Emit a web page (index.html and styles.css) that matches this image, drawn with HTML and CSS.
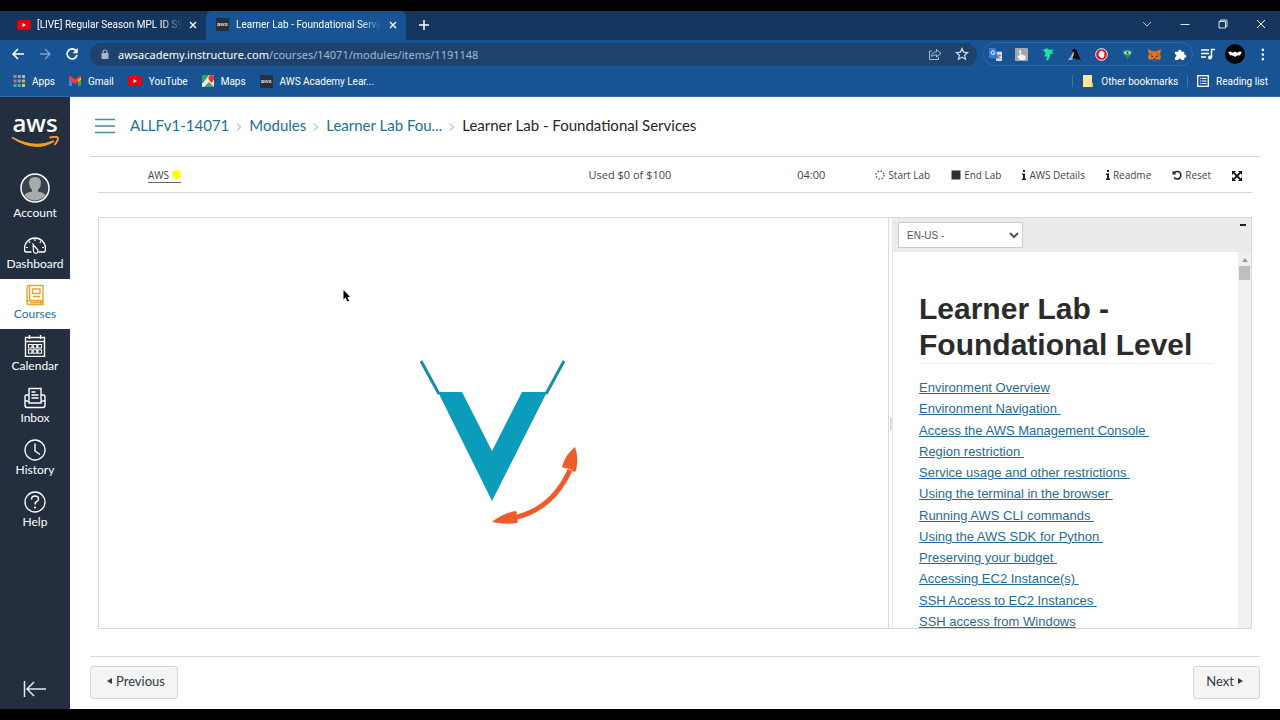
FILE: index.html
```html
<!DOCTYPE html>
<html lang="en">

<head>
    <meta charset="utf-8">
    <title>Learner Lab - Foundational Services</title>
    <link rel="stylesheet" href="styles.css">
</head>

<body>
    <header class="browser">
        <div class="tabs">
            <div class="tab">
                <svg class="yt" viewBox="0 0 14 10"><rect width="14" height="10" rx="2" fill="#e8000b"/><path d="M5.5 3v4L9 5z" fill="#fff"/></svg>
                <span class="tab-title">[LIVE] Regular Season MPL ID S9</span>
                <button class="tab-close" aria-label="Close tab"><svg viewBox="0 0 8 8"><path d="M1 1l6 6M7 1L1 7" stroke="#fff" stroke-width="1.4"/></svg></button>
            </div>
            <div class="tab active">
                <span class="aws-fav">aws</span>
                <span class="tab-title">Learner Lab - Foundational Servic</span>
                <button class="tab-close" aria-label="Close tab"><svg viewBox="0 0 8 8"><path d="M1 1l6 6M7 1L1 7" stroke="#fff" stroke-width="1.4"/></svg></button>
            </div>
            <button class="new-tab" aria-label="New tab"><svg viewBox="0 0 10 10"><path d="M5 0v10M0 5h10" stroke="#fff" stroke-width="1.5"/></svg></button>
            <div class="window-controls">
                <button aria-label="Search tabs"><svg viewBox="0 0 10 10"><path d="M1 3l4 4 4-4" stroke="#b9c8dc" fill="none"/></svg></button>
                <button aria-label="Minimize"><svg viewBox="0 0 10 10"><path d="M.5 5.5h9" stroke="#dce5f0"/></svg></button>
                <button aria-label="Restore"><svg viewBox="0 0 10 10"><path d="M1 2.5h6.5v6.500H1zM2.500 2.500V1h5.500q1 0 1 1v5.500H7.500" stroke="#dce5f0" fill="none"/></svg></button>
                <button aria-label="Close"><svg viewBox="0 0 10 10"><path d="M1 1l8 8M9 1L1 9" stroke="#fff"/></svg></button>
            </div>
        </div>

        <div class="toolbar">
            <button class="nav-btn" aria-label="Back"><svg viewBox="0 0 14 14"><path d="M13 7H2M7 2L2 7l5 5" stroke="#fff" stroke-width="1.6" fill="none"/></svg></button>
            <button class="nav-btn" aria-label="Forward"><svg viewBox="0 0 14 14"><path d="M2 7h10M7 2l5 5-5 5" stroke="#7f9fca" stroke-width="1.4" fill="none"/></svg></button>
            <button class="nav-btn" aria-label="Reload"><svg viewBox="0 0 14 14"><path d="M11.500 4.500A5 5 0 1 0 12 8" stroke="#fff" stroke-width="1.700" fill="none"/><path d="M12.800 1v5.200H7.600z" fill="#fff"/></svg></button>
            <div class="omnibox">
                <svg class="lock" viewBox="0 0 10 10"><rect x="1.500" y="4" width="7" height="6" rx="1" fill="#a9b7c8"/><path d="M3 4.500V3a2 2 0 0 1 4 0v1.500" stroke="#a9b7c8" stroke-width="1.200" fill="none"/></svg>
                <span class="url"><b>awsacademy.instructure.com</b>/courses/14071/modules/items/1191148</span>
                <button aria-label="Share"><svg viewBox="0 0 14 14"><path d="M4 4H1.500v8.500h9V10" stroke="#a9bfdc" fill="none"/><path d="M3.500 9.500q.5-4.500 5-4.700V2.500l4.500 3.800-4.500 3.700V7.800q-3 0-5 1.700z" stroke="#a9bfdc" fill="none"/></svg></button>
                <button aria-label="Bookmark this tab"><svg viewBox="0 0 14 14"><path d="M7 1.500l1.600 3.700 4 .4-3 2.700.9 3.900L7 10.100l-3.500 2.100.9-3.900-3-2.700 4-.4z" stroke="#d3deec" stroke-width="1.200" fill="none"/></svg></button>
            </div>
            <div class="extensions">
                <svg viewBox="0 0 14 14"><path d="M6 4h8v10H8z" fill="#d9dde3"/><path d="M9 8h4M11 7v1q0 2-2 3.500M9.500 9q1 2 3 2.500" stroke="#667" fill="none" stroke-width=".8"/><path d="M0 0h7l3 11H1q-1 0-1-1z" fill="#3f79dd"/><path d="M6 3.800a2 2 0 1 0 .4 1.700H4.500" stroke="#fff" fill="none"/></svg>
                <svg viewBox="0 0 14 14"><rect width="14" height="14" rx="1" fill="#a5a9ac"/><path d="M4 3q1-1.500 2.500 0V7l4 1q1.500.5 1 2.500L10.500 13H5L2.500 9l1-1L5 9V5z" fill="#f4f4f4"/></svg>
                <svg viewBox="0 0 14 14"><path d="M0 2l3-.5L5 0l2 1.500 6 .5-2.500 2L13 6.500 9 6l-.5 3-2 4.500L4.500 13 5.500 9 2 9.500 4 6 2.500 3.500z" fill="#1fe59a"/></svg>
                <svg viewBox="0 0 14 14"><path d="M0 13h5L5.500 5 3 9z" fill="#9bacbf"/><path d="M4.500 3q.5-2.500 3-2 2 .5 2.500 3.500l2.500 5.500 1.500 3-3-1.500L10 13 7 10.500 5 12l1-7z" fill="#0a0a0d"/><path d="M6 4.500L5 9" stroke="#ddd"/></svg>
                <svg viewBox="0 0 14 14"><circle cx="7" cy="7" r="6.300" fill="#d5142e" stroke="#fff" stroke-width="1"/><path d="M4 7V5h1V3.500h1V3h2v.5h1v1h1V8q0 3-3 3-1.500 0-3.500-3.500z" fill="#fff"/></svg>
                <svg viewBox="0 0 14 14"><path d="M2 3l5-2 5 2q0 5-4 7l-1 3-1-3Q2 8 2 3z" fill="#1b8d62"/><ellipse cx="7" cy="5" rx="3.500" ry="1.800" fill="#d8efdf"/><circle cx="7" cy="5" r="1.300" fill="#174a3c"/></svg>
                <svg viewBox="0 0 14 14"><path d="M0 1l5 2.500h4L14 1l-1 6 1 3-1 3-3-.8-1.500 1h-3L4 12.200 1 13l-1-3 1-3z" fill="#e2761b"/><path d="M1 7l4-3.500L4 8zM13 7L9 3.500 10 8z" fill="#c05f18"/><path d="M3.500 8.500l2 1M10.500 8.500l-2 1M5.500 12h3" stroke="#26333f" stroke-width="1.200"/></svg>
                <svg viewBox="0 0 14 14"><path d="M1 4h3.500a1.800 1.800 0 1 1 3.500 0h3v3a1.800 1.800 0 1 1 0 3.500V13H8a1.700 1.700 0 0 0-3.400 0H1V9.800a1.700 1.700 0 0 0 0-3.400z" fill="#fff"/></svg>
            </div>
            <button class="media" aria-label="Media control"><svg viewBox="0 0 14 12"><path d="M0 2h8M0 5.500h8M0 9h5" stroke="#fff" stroke-width="1.500"/><path d="M10.500 9V1.500H14" stroke="#fff" stroke-width="1.500" fill="none"/><circle cx="9" cy="9.500" r="2" fill="#fff"/></svg></button>
            <button class="profile" aria-label="Profile"><svg viewBox="0 0 20 20"><circle cx="10" cy="10" r="10" fill="#000"/><path d="M3 8q3-1 4 .5h1.800l.4-1 .8.500.8-.5.4 1H13q1-1.500 4-.5-1.500 1.500-2 3.500-2-.5-3 .3-1 0-2 1.400-1-1.400-2-1.400-1-.8-3-.3-.5-2-2-3.500z" fill="#fff"/></svg></button>
            <button class="dots" aria-label="Menu"><svg viewBox="0 0 4 14"><circle cx="2" cy="2" r="1.400" fill="#fff"/><circle cx="2" cy="7" r="1.400" fill="#fff"/><circle cx="2" cy="12" r="1.400" fill="#fff"/></svg></button>
        </div>

        <nav class="bookmarks">
            <a href="#"><svg class="bm" viewBox="0 0 12 12"><path d="M.5 0h3v3h-3zM.5 4.500h3v3h-3z" fill="#d66f66"/><path d="M4.800 0h3v3h-3z" fill="#e98279"/><path d="M9 0h3v3H9zM9 4.500h3v3H9z" fill="#d4b45c"/><path d="M4.800 4.500h3v3h-3z" fill="#66a2ed"/><path d="M.5 9h3v3h-3zM4.800 9h3v3h-3z" fill="#5aa889"/><path d="M9 9h3v3H9z" fill="#d6c370"/></svg>Apps</a>
            <a href="#"><svg class="bm" viewBox="0 0 12 12"><path d="M0 2.500V10q0 1 1 1h2V5z" fill="#4285f4"/><path d="M12 2.500V10q0 1-1 1H9V5z" fill="#34a853"/><path d="M0 2q1-1.500 2.500-.5L6 4.500l3.500-3Q11 .5 12 2v3L6 9 0 5z" fill="#e84033"/><path d="M9 5l3-3v3L9 7z" fill="#fbbc04"/></svg>Gmail</a>
            <a href="#"><svg class="yt" viewBox="0 0 14 10"><rect width="14" height="10" rx="2" fill="#e8000b"/><path d="M5.500 3v4L9 5z" fill="#fff"/></svg>YouTube</a>
            <a href="#"><svg class="bm" viewBox="0 0 12 12"><rect width="12" height="12" rx="1" fill="#e5eee5"/><path d="M0 0h7L1 8H0z" fill="#2da94f"/><path d="M6 6l6 6H1z" fill="#4f9f65"/><path d="M0 11L9 2l1 2-8 8z" fill="#f3f3ef"/><path d="M9.500 8Q6.500 4.500 6.500 3a3 3 0 0 1 6 0Q12.500 4.500 9.500 8z" fill="#e4382d"/></svg>Maps</a>
            <a href="#"><span class="aws-fav">aws</span>AWS Academy Lear...</a>
            <div class="bookmarks-right">
                <a href="#"><svg class="bm" viewBox="0 0 12 12"><path d="M1 0h9v8h1v4H1z" fill="#fce694"/><path d="M9 8h2v4H9z" fill="#e5c65c"/></svg>Other bookmarks</a>
                <a href="#"><svg class="bm" viewBox="0 0 12 12"><rect x=".7" y=".7" width="10.600" height="10.600" fill="none" stroke="#fff" stroke-width="1.300"/><path d="M3 3.500h1.200M5 3.500h4.500M3 6h1.200M5 6h4.500M3 8.500h1.200M5 8.500h4.500" stroke="#fff"/></svg>Reading list</a>
            </div>
        </nav>
    </header>

    <div class="page">
        <nav class="sidebar">
            <a class="logo" href="#" aria-label="AWS Academy">
                <span>aws</span>
                <svg viewBox="0 0 48 12"><path d="M1 1.500q22 12 42 3.500-19 12-42-3.500z" fill="#f29d1f" stroke="#f29d1f" stroke-width="1.500"/><path d="M38.500 1.500q8-1.500 8.500.5t-3.500 7" stroke="#f29d1f" stroke-width="2" fill="none"/></svg>
            </a>
            <a class="side-item account" href="#">
                <svg viewBox="0 0 30 30"><circle cx="15" cy="15" r="14" fill="#39434f"/><path d="M12 17v1.500Q5 20 4.500 22.500q10 10 21 0Q25 20 18 18.500V17q3-3 3-7 0-6-6-6T9 10q0 4 3 7z" fill="#a8abad"/><circle cx="15" cy="15" r="14" fill="none" stroke="#fff" stroke-width="1.500"/></svg>
                Account
            </a>
            <a class="side-item" href="#">
                <svg viewBox="0 0 22 22"><path d="M2 18Q.5 18 .5 14.500a10.500 10.500 0 0 1 21 0Q21.500 18 20 18h-5.500M2 18h5.500" stroke="#fff" stroke-width="1.400" fill="none"/><path d="M9 10.500l4.500 5a2.300 2.300 0 1 1-4 1z" stroke="#fff" stroke-width="1.200" fill="none"/><path d="M11 4.500v2.500M5 7.500l1.300 1.300M17 7.500l-1.300 1.300M2 13.500h2M18 13.500h2" stroke="#fff" stroke-width="1.200"/></svg>
                Dashboard
            </a>
            <a class="side-item current" href="#">
                <svg viewBox="0 0 22 22"><path d="M19 1.500H5.500Q3 1.500 3 4v14q0 2.500 2.500 2.500H19zM19 16.500H5.500Q3 16.500 3 18.500M5.500 1.500v15M8.500 5H16v4.500H8.500zM9 12.500h7M6 18.500h13M17 16.500v4" stroke="#e9a22d" stroke-width="1.400" fill="none"/></svg>
                Courses
            </a>
            <a class="side-item" href="#">
                <svg viewBox="0 0 22 22"><path d="M1.500 2.500h19v19h-19zM1.500 6.500h19M5.500 0v4M16.500 0v4" stroke="#fff" stroke-width="1.400" fill="none"/><path d="M4.500 9.500h3.500v3.500H4.500zM9.300 9.500h3.500v3.500H9.300zM14 9.500h3.500v3.500H14zM4.500 14.800h3.500v3.500H4.500zM9.300 14.800h3.500v3.500H9.300zM14 14.800h3.500v3.500H14z" stroke="#fff" stroke-width="1.100" fill="none"/></svg>
                Calendar
            </a>
            <a class="side-item" href="#">
                <svg viewBox="0 0 22 22"><path d="M5 13V1.500h12V13M7.500 5h4M7.500 8h7M7.500 11h7M5 8H2.500Q1 8 1 10v8q0 2.500 2 2.500h16q2 0 2-2.500v-8q0-2-1.500-2H17M1 14h4v2h12v-2h4" stroke="#fff" stroke-width="1.400" fill="none"/></svg>
                Inbox
            </a>
            <a class="side-item" href="#">
                <svg viewBox="0 0 22 22"><circle cx="11" cy="11" r="10" stroke="#fff" stroke-width="1.300" fill="none"/><path d="M11 4.500V12l5 3.500" stroke="#fff" stroke-width="1.400" fill="none"/></svg>
                History
            </a>
            <a class="side-item" href="#">
                <svg viewBox="0 0 22 22"><circle cx="11" cy="11" r="10" stroke="#fff" stroke-width="1.300" fill="none"/><path d="M7.500 8.500q0-3.500 3.500-3.500t3.500 3q0 1.500-1.800 2.500T11 13.500" stroke="#fff" stroke-width="1.500" fill="none"/><circle cx="11" cy="16.500" r="1.100" fill="#fff"/></svg>
                Help
            </a>
            <button class="collapse" aria-label="Minimize global navigation"><svg viewBox="0 0 24 18"><path d="M1.500 1v16M23 9H5M11 2L4 9l7 7" stroke="#e4e9ee" stroke-width="1.500" fill="none"/></svg></button>
        </nav>

        <main class="content">
            <div class="crumbs">
                <button class="hamburger" aria-label="Course navigation"><svg viewBox="0 0 20 16"><path d="M0 1.500h20M0 8h20M0 14.500h20" stroke="#4e8ba0" stroke-width="1.500"/></svg></button>
                <a href="#">ALLFv1-14071</a>
                <svg class="chev" viewBox="0 0 6 8"><path d="M1 .5L4.500 4 1 7.500" stroke="#8b969e" fill="none"/></svg>
                <a href="#">Modules</a>
                <svg class="chev" viewBox="0 0 6 8"><path d="M1 .5L4.500 4 1 7.500" stroke="#8b969e" fill="none"/></svg>
                <a href="#">Learner Lab Fou...</a>
                <svg class="chev" viewBox="0 0 6 8"><path d="M1 .5L4.500 4 1 7.500" stroke="#8b969e" fill="none"/></svg>
                <span>Learner Lab - Foundational Services</span>
            </div>

            <div class="lab-bar">
                <div class="lab-aws"><a href="#">AWS <i class="status"></i></a></div>
                <span>Used $0 of $100</span>
                <span>04:00</span>
                <div class="lab-actions">
                    <button><svg viewBox="0 0 10 10"><circle cx="5" cy="5" r="4" stroke="#555" stroke-width="1.400" stroke-dasharray="1.500 1.640" fill="none"/></svg>Start Lab</button>
                    <button><svg viewBox="0 0 10 10"><path d="M.5.500h9v9h-9z" fill="#2d2f33"/></svg>End Lab</button>
                    <button><svg class="info" viewBox="0 0 4 10"><path d="M1 0h2v2H1zM0 3.500h3V8.500h1V10H0V8.500h1V5H0z" fill="#222"/></svg>AWS Details</button>
                    <button><svg class="info" viewBox="0 0 4 10"><path d="M1 0h2v2H1zM0 3.500h3V8.500h1V10H0V8.500h1V5H0z" fill="#222"/></svg>Readme</button>
                    <button><svg viewBox="0 0 10 10"><path d="M2 3a3.800 3.800 0 1 1 0 4.500" stroke="#222" stroke-width="1.500" fill="none"/><path d="M.5.500v4h4z" fill="#222"/></svg>Reset</button>
                    <button class="full" aria-label="Full screen"><svg viewBox="0 0 10 10"><path d="M2 2l6 6M8 2L2 8" stroke="#111" stroke-width="1.800"/><path d="M0 0h4L0 4zM10 0v4L6 0zM0 10V6l4 4zM10 10H6l4-4z" fill="#111"/></svg></button>
                </div>
            </div>

            <div class="frame">
                <section class="terminal">
                    <svg class="loader" viewBox="0 0 160 168">
                        <path d="M19 33h24l30 59 30-59h25L73 142z" fill="#0c9cbb"/>
                        <path d="M2 2l18 33M145 2l-18 33" stroke="#158fa9" stroke-width="3"/>
                        <path d="M94 159Q133 151 151 111" stroke="#ee5c29" stroke-width="5" fill="none"/>
                        <path d="M73 163q10-8 23-11l2 1-1 4 2 6-1 1q-12 2-25-1zM156 88q4 10 1 24l-2 1-4-3-6-1-2-1q3-12 13-20z" fill="#ee5c29"/>
                    </svg>
                    <svg class="pointer" viewBox="0 0 8 12"><path d="M.5 0v9.500l2-2 1.800 4 1.700-.8L4.300 7H7z" fill="#000"/></svg>
                </section>
                <div class="splitter"></div>
                <section class="readme">
                    <div class="readme-head">
                        <select aria-label="Language">
                            <option>EN-US -</option>
                        </select>
                        <button class="minimize" aria-label="Minimize"></button>
                    </div>
                    <div class="readme-body">
                        <article>
                            <h1>Learner Lab - Foundational Level</h1>
                            <ul>
                                <li><a href="#">Environment Overview</a></li>
                                <li><a href="#">Environment Navigation&nbsp;</a></li>
                                <li><a href="#">Access the AWS Management Console&nbsp;</a></li>
                                <li><a href="#">Region restriction&nbsp;</a></li>
                                <li><a href="#">Service usage and other restrictions&nbsp;</a></li>
                                <li><a href="#">Using the terminal in the browser&nbsp;</a></li>
                                <li><a href="#">Running AWS CLI commands&nbsp;</a></li>
                                <li><a href="#">Using the AWS SDK for Python&nbsp;</a></li>
                                <li><a href="#">Preserving your budget&nbsp;</a></li>
                                <li><a href="#">Accessing EC2 Instance(s)&nbsp;</a></li>
                                <li><a href="#">SSH Access to EC2 Instances&nbsp;</a></li>
                                <li><a href="#">SSH access from Windows</a></li>
                            </ul>
                        </article>
                        <div class="scrollbar">
                            <svg viewBox="0 0 8 4"><path d="M1 4l3-4 3 4z" fill="#999"/></svg>
                            <div class="thumb"></div>
                        </div>
                    </div>
                </section>
            </div>

            <footer class="pager">
                <a href="#"><svg viewBox="0 0 5 6"><path d="M5 0v6L0 3z" fill="#2d3b45"/></svg>Previous</a>
                <a href="#">Next<svg viewBox="0 0 5 6"><path d="M0 0v6l5-3z" fill="#2d3b45"/></svg></a>
            </footer>
        </main>
    </div>
</body>

</html>
```
FILE: styles.css
```css
* {
    box-sizing: border-box;
}

body {
    margin: 0;
    padding: 11px 0;
    height: 100vh;
    display: flex;
    flex-direction: column;
    background: #000;
    font-family: Lato, sans-serif;
    overflow: hidden;
}

a {
    color: inherit;
    text-decoration: none;
}

button {
    display: flex;
    align-items: center;
    justify-content: center;
    padding: 0;
    border: 0;
    background: none;
    color: inherit;
    font: inherit;
    cursor: pointer;
}

svg {
    display: block;
    flex: none;
}

/* browser */
.browser {
    flex: none;
    color: #fff;
    background: #185394;
    font-family: Roboto, sans-serif;
    font-size: 10px;
    border-bottom: 1px solid #376ba6;
}

.tabs {
    display: flex;
    height: 29px;
    background: #14365f;
}

.tab {
    display: flex;
    align-items: center;
    width: 200px;
    padding: 0 9px 2px 10px;
    gap: 7px;
}

.tab:first-child {
    width: 206px;
    padding-left: 17px;
    gap: 6px;
}

.tab.active {
    background: #185394;
    border-radius: 6px 6px 0 0;
}

.tab-title {
    flex: 1;
    min-width: 0;
    white-space: nowrap;
    -webkit-mask-image: linear-gradient(90deg, #000 85%, transparent);
    mask-image: linear-gradient(90deg, #000 85%, transparent);
}

.tab-close svg {
    width: 8px;
}

.new-tab {
    width: 36px;
    padding-bottom: 2px;
}

.new-tab svg {
    width: 10px;
}

.window-controls {
    display: flex;
    margin-left: auto;
}

.window-controls button {
    width: 38px;
    height: 25px;
}

.window-controls svg {
    width: 10px;
}

.yt {
    width: 14px;
    height: 10px;
}

.aws-fav {
    flex: none;
    width: 13px;
    height: 13px;
    background: #2a3038;
    color: #fff;
    font-size: 6px;
    line-height: 11px;
    text-align: center;
}

.toolbar {
    display: flex;
    align-items: center;
    height: 30px;
    padding: 0 8px 2px 4px;
}

.nav-btn {
    width: 27px;
}

.nav-btn svg {
    width: 14px;
}

.omnibox {
    flex: 1;
    display: flex;
    align-items: center;
    height: 23px;
    margin-left: 5px;
    padding: 0 8px 0 10px;
    border-radius: 12px;
    background: #1d436d;
    gap: 13px;
}

.omnibox .lock {
    width: 10px;
    margin-right: -5px;
}

.omnibox button svg {
    width: 14px;
}

.url {
    flex: 1;
    font-family: "Noto Sans", sans-serif;
    font-size: 11px;
    color: #a3b8d3;
}

.url b {
    font-weight: 400;
    color: #fff;
}

.extensions {
    display: flex;
    align-items: center;
    justify-content: space-between;
    width: 210px;
    height: 24px;
    margin-left: 6px;
    padding: 0 5px;
    border: 1px solid #2f68a8;
    border-radius: 12px;
}

.extensions svg {
    width: 13px;
}

.media {
    width: 30px;
}

.media svg {
    width: 14px;
}

.profile {
    width: 24px;
}

.profile svg {
    width: 20px;
}

.dots {
    flex: none;
    width: 25px;
    padding-left: 6px;
}

.dots svg {
    height: 13px;
}

.bookmarks {
    display: flex;
    align-items: center;
    height: 26px;
    padding: 0 12px 4px 13px;
    gap: 14px;
}

.bookmarks a {
    display: flex;
    align-items: center;
    gap: 7px;
}

.bm {
    width: 12px;
    height: 12px;
}

.bookmarks-right {
    display: flex;
    margin-left: auto;
    gap: 9px;
}

.bookmarks-right a {
    padding-left: 9px;
    border-left: 1px solid #3f74ae;
}

/* page */
.page {
    flex: 1;
    display: flex;
    min-height: 0;
    background: #fff;
}

.sidebar {
    display: flex;
    flex-direction: column;
    flex: none;
    width: 70px;
    background: #232f3e;
    color: #fff;
    font-size: 12px;
    line-height: 16px;
}

.logo {
    display: flex;
    flex-direction: column;
    align-items: center;
    height: 69px;
    padding-top: 14px;
    gap: 1px;
}

.logo span {
    font-family: "Open Sans", sans-serif;
    font-size: 24px;
    font-weight: 600;
    line-height: 24px;
}

.logo svg {
    width: 48px;
}

.side-item {
    display: flex;
    flex-direction: column;
    align-items: center;
    height: 52px;
    padding-top: 6px;
    gap: 1px;
}

.side-item svg {
    width: 22px;
    height: 22px;
}

.side-item:nth-child(3),
.side-item.current {
    height: 50px;
    padding-top: 5px;
    gap: 0;
}

.side-item.account {
    height: 63px;
    padding-top: 7px;
    gap: 2px;
}

.side-item.account svg {
    width: 30px;
    height: 30px;
}

.side-item.current {
    background: #fff;
    color: #2f6d94;
}

.collapse {
    margin: auto 0 11px;
}

.collapse svg {
    width: 24px;
}

.content {
    flex: 1;
    display: flex;
    flex-direction: column;
    min-width: 0;
    padding: 0 20px;
}

.crumbs {
    display: flex;
    align-items: center;
    height: 60px;
    padding: 0 0 3px 5px;
    border-bottom: 1px solid #d3d6d8;
    font-size: 15px;
    color: #1c262e;
}

.crumbs a {
    color: #21718f;
}

.hamburger {
    margin: 2px 15px 0 0;
}

.hamburger svg {
    width: 20px;
}

.chev {
    width: 6px;
    margin: 3px 7px 0;
}

.lab-bar {
    display: grid;
    grid-template-columns: 489fr 208fr 78fr auto;
    align-items: center;
    height: 36px;
    margin: 0 8px;
    border-bottom: 1px solid #d8d8d8;
    font-family: "Open Sans", sans-serif;
    font-size: 11px;
    color: #444;
}

.lab-aws {
    padding: 1px 0 0 50px;
    font-size: 10px;
}

.lab-aws a {
    display: inline-flex;
    align-items: center;
    gap: 3px;
    border-bottom: 1px solid #666;
}

.status {
    width: 9px;
    height: 9px;
    border-radius: 50%;
    background: #ff0;
}

.lab-actions {
    display: flex;
    align-items: center;
    gap: 21px;
    padding-right: 10px;
    font-size: 10px;
}

.lab-actions button {
    gap: 3px;
}

.lab-actions svg {
    width: 10px;
}

.lab-actions .info {
    width: 4px;
}

.lab-actions .full {
    padding-top: 3px;
}

.frame {
    flex: 1;
    display: flex;
    min-height: 0;
    margin: 24px 8px 27px;
    border: 1px solid #d9d9d9;
}

.terminal {
    flex: 1;
    position: relative;
    display: flex;
    align-items: center;
    justify-content: center;
    border-right: 1px solid #d9d9d9;
}

.loader {
    width: 160px;
    margin: 40px 0 0 10px;
}

.pointer {
    position: absolute;
    left: 244px;
    top: 72px;
    width: 8px;
}

.splitter {
    display: flex;
    align-items: center;
    justify-content: flex-end;
    width: 4px;
    border-right: 1px solid #e8e8e8;
}

.splitter::before {
    content: "";
    width: 2px;
    height: 13px;
    background: #ddd;
}

.readme {
    display: flex;
    flex-direction: column;
    flex: none;
    width: 358px;
    font-family: "Liberation Sans", sans-serif;
}

.readme-head {
    display: flex;
    justify-content: space-between;
    align-items: flex-start;
    flex: none;
    height: 34px;
    padding: 4px 5px;
    background: #ebebeb;
}

.readme-head select {
    width: 125px;
    height: 26px;
    padding: 0 3px 0 4px;
    border: 1px solid #ccc;
    border-radius: 0;
    background-color: #fff;
    color: #555;
    font-family: "Liberation Sans", sans-serif;
    font-size: 10px;
}

.minimize {
    width: 6px;
    height: 2px;
    margin-top: 2px;
    background: #222;
}

.readme-body {
    flex: 1;
    display: flex;
    min-height: 0;
    overflow: hidden;
}

.readme-body article {
    flex: 1;
    padding: 39px 25px 0 26px;
}

h1 {
    margin: 0;
    border-bottom: 1px solid #eee;
    font-size: 30px;
    line-height: 36px;
    color: #2b2b2b;
}

.readme ul {
    display: grid;
    grid-auto-rows: 1fr;
    height: 255px;
    margin: 13px 0 0;
    padding: 0;
    list-style: none;
    font-size: 13px;
    line-height: 21px;
    color: #1f6c94;
}

.readme li a {
    text-decoration: underline;
}

.scrollbar {
    display: flex;
    flex-direction: column;
    align-items: center;
    width: 13px;
    padding-top: 6px;
    background: #f0f0f0;
}

.scrollbar svg {
    width: 8px;
}

.thumb {
    width: 11px;
    height: 14px;
    margin-top: 4px;
    background: #bfbfbf;
}

.pager {
    display: flex;
    justify-content: space-between;
    flex: none;
    padding: 9px 0 10px;
    border-top: 1px solid #dcdcdc;
    font-size: 13px;
    color: #2d3b45;
}

.pager a {
    display: flex;
    align-items: center;
    height: 33px;
    padding: 0 12px 3px;
    gap: 4px;
    border: 1px solid #d3d6d8;
    border-radius: 3px;
    background: #f4f4f4;
}

.pager a:first-child {
    padding-left: 16px;
}

.pager a:last-child {
    padding-right: 16px;
}

.pager svg {
    width: 5px;
}
```
